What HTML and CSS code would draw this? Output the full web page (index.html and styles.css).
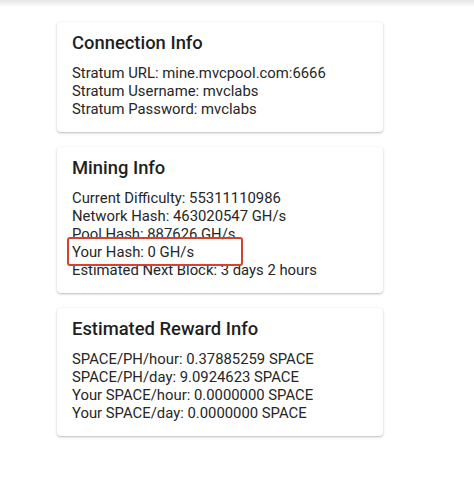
FILE: index.html
```html
<!DOCTYPE html>
<html>
<head>
<meta charset="utf-8">
<link rel="stylesheet" href="styles.css">
</head>
<body>
<div class="topbar"></div>
<main class="content">
  <section class="card">
    <h2 class="title">Connection Info</h2>
    <div class="lines">
      <div>Stratum URL: mine.mvcpool.com:6666</div>
      <div>Stratum Username: mvclabs</div>
      <div>Stratum Password: mvclabs</div>
    </div>
  </section>
  <section class="card">
    <h2 class="title">Mining Info</h2>
    <div class="lines">
      <div>Current Difficulty: 55311110986</div>
      <div>Network Hash: 463020547 GH/s</div>
      <div>Pool Hash: 887626 GH/s</div>
      <div class="marked">Your Hash: 0 GH/s</div>
      <div>Estimated Next Block: 3 days 2 hours</div>
    </div>
  </section>
  <section class="card">
    <h2 class="title">Estimated Reward Info</h2>
    <div class="lines">
      <div>SPACE/PH/hour: 0.37885259 SPACE</div>
      <div>SPACE/PH/day: 9.0924623 SPACE</div>
      <div>Your SPACE/hour: 0.0000000 SPACE</div>
      <div>Your SPACE/day: 0.0000000 SPACE</div>
    </div>
  </section>
</main>
</body>
</html>
```
FILE: styles.css
```css
html, body {
  margin: 0;
  padding: 0;
  background: #fff;
}
body {
  font-family: Roboto, "Liberation Sans", sans-serif;
  color: #222;
  width: 474px;
  height: 503px;
  overflow: hidden;
}
.topbar {
  height: 6px;
  background: linear-gradient(#e6e6e6, #fafafa);
}
.content {
  display: flex;
  flex-direction: column;
  gap: 15px;
  padding: 16px 0 0 57px;
}
.card {
  width: 326px;
  box-sizing: border-box;
  padding: 8px 16px 14px 15px;
  background: #fff;
  border-radius: 4px;
  box-shadow: 0 1px 3px rgba(0,0,0,0.22), 0 1px 1px rgba(0,0,0,0.06);
}
.title {
  margin: 0 0 8px;
  font-size: 18.4px;
  line-height: 26px;
  font-weight: 500;
  color: #1f1f1f;
}
.lines {
  font-size: 14.85px;
  line-height: 18px;
  color: #262626;
}
.marked {
  position: relative;
}
.marked::after {
  content: "";
  position: absolute;
  left: -5px;
  top: -6px;
  width: 176px;
  height: 29px;
  box-sizing: border-box;
  border: 2px solid #d8412f;
  border-radius: 3px;
}
```
